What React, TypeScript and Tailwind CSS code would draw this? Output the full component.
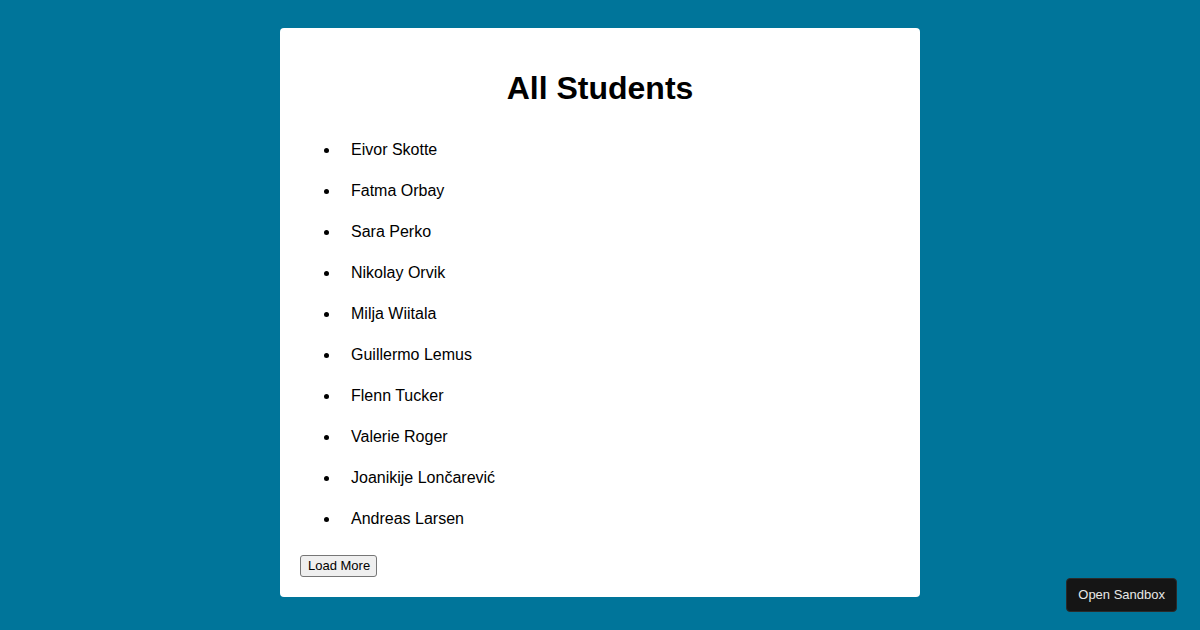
const students = [
  "Eivor Skotte",
  "Fatma Orbay",
  "Sara Perko",
  "Nikolay Orvik",
  "Milja Wiitala",
  "Guillermo Lemus",
  "Flenn Tucker",
  "Valerie Roger",
  "Joanikije Lončarević",
  "Andreas Larsen",
];

export default function App() {
  return (
    <div
      className="min-h-[630px] w-full bg-[#00759a] pt-[28px] text-black"
      style={{ fontFamily: '"Liberation Sans", Arial, sans-serif' }}
    >
      <div className="mx-auto w-[640px] rounded-[4px] bg-white p-[20px]">
        <h1 className="mt-[22px] mb-[22px] text-center text-[32px] font-bold leading-[37px]">
          All Students
        </h1>
        <ul className="list-disc pl-[40px]">
          {students.map((name) => (
            <li key={name} className="py-[11px] pl-[11px] text-[16px] leading-[19px]">
              {name}
            </li>
          ))}
        </ul>
        <button
          type="button"
          className="mt-[16px] h-[22px] rounded-[3px] border border-[#767676] bg-[#efefef] pl-[7px] pr-[6px] text-[13px] leading-[16px]"
        >
          Load More
        </button>
      </div>
      <button
        type="button"
        className="fixed bottom-[18px] right-[23px] h-[34px] rounded-[4px] border border-[#2a2a2a] bg-[#151515] px-[11px] text-[13px] text-[#e8e8e8]"
      >
        Open Sandbox
      </button>
    </div>
  );
}
